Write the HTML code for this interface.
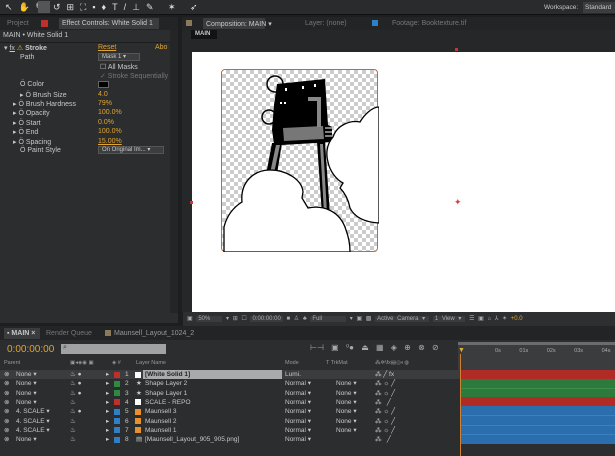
<!DOCTYPE html>
<html><head><meta charset="utf-8"><style>
*{margin:0;padding:0;box-sizing:border-box}
body{width:615px;height:456px;overflow:hidden;background:#1d1e1f;font-family:"Liberation Sans",sans-serif;font-size:7px;color:#c8c8c8;position:relative}
.a{position:absolute;white-space:nowrap}
.y{color:#e2a431}
.drop{position:absolute;background:#3b3d3f;border:1px solid #555;height:8px}
.row{position:absolute;left:0;width:460px;height:9px;font-size:6.5px;line-height:9px}
.row span{position:absolute}
.sw{position:absolute;width:6px;height:6px;top:1.5px}
.bar{position:absolute;left:461px;width:154px}
</style></head><body>
<!-- toolbar -->
<div class="a" style="left:0;top:0;width:615px;height:15px;background:#2a2b2c;border-bottom:1px solid #111"></div>
<div class="a" style="left:5px;top:2px;font-size:9px;color:#ddd;letter-spacing:6px">↖✋🔍↺⊞⛶▪♦T/⊥✎ ✶ ➶</div>
<div class="a" style="left:38px;top:1px;width:12px;height:12px;background:#555"></div>
<div class="a" style="left:544px;top:4px;font-size:6.5px">Workspace:</div>
<div class="a" style="left:583px;top:2px;width:32px;height:11px;background:#3b3d3f;font-size:6.5px;padding:2px">Standard</div>
<!-- left panel -->
<div class="a" style="left:0;top:17px;width:178px;height:306px;background:#2b2d2e"></div>
<div class="a" style="left:0;top:17px;width:178px;height:13px;background:#232425"></div>
<div class="a" style="left:7px;top:20px;color:#777">Project</div>
<div class="a" style="left:41px;top:20px;width:7px;height:7px;background:#c0302a"></div>
<div class="a" style="left:59px;top:18px;width:100px;height:11px;background:#3a3c3e;padding:2px 3px">Effect Controls: White Solid 1</div>
<div class="a" style="left:170px;top:30px;width:8px;height:283px;background:#242526"></div>
<div class="a" style="left:3px;top:32px">MAIN • White Solid 1</div>
<div class="a" style="left:0;top:42px;width:170px;height:1px;background:#1d1d1d"></div>
<div class="a" style="left:4px;top:44px">▾ <u>fx</u> <span style="color:#e5b030">⚠</span> <b>Stroke</b></div>
<div class="a y" style="left:98px;top:44px;text-decoration:underline">Reset</div>
<div class="a y" style="left:155px;top:44px">Abo</div>
<div class="a" style="left:20px;top:54px">Path</div>
<div class="drop" style="left:98px;top:53px;width:42px;padding-left:3px;font-size:6px;line-height:7px">Mask 1 ▾</div>
<div class="a" style="left:100px;top:63px">☐ All Masks</div>
<div class="a" style="left:100px;top:72px;color:#777">✓ Stroke Sequentially</div>
<div class="a" style="left:20px;top:81px">Ö Color</div>
<div class="a" style="left:98px;top:81px;width:11px;height:7px;background:#000;border:1px solid #666"></div>
<div class="a" style="left:20px;top:91px">▸ Ö Brush Size</div><div class="a y" style="left:98px;top:91px">4.0</div>
<div class="a" style="left:13px;top:100px">▸ Ö Brush Hardness</div><div class="a y" style="left:98px;top:100px">79%</div>
<div class="a" style="left:13px;top:109px">▸ Ö Opacity</div><div class="a y" style="left:98px;top:109px">100.0%</div>
<div class="a" style="left:13px;top:119px">▸ Ö Start</div><div class="a y" style="left:98px;top:119px">0.0%</div>
<div class="a" style="left:13px;top:128px">▸ Ö End</div><div class="a y" style="left:98px;top:128px">100.0%</div>
<div class="a" style="left:13px;top:138px">▸ Ö Spacing</div><div class="a y" style="left:98px;top:138px;text-decoration:underline">15.00%</div>
<div class="a" style="left:20px;top:147px">Ö Paint Style</div>
<div class="drop" style="left:98px;top:146px;width:66px;padding-left:3px;font-size:6px;line-height:7px">On Original Im... ▾</div>
<!-- comp panel -->
<div class="a" style="left:182px;top:17px;width:433px;height:13px;background:#232425"></div>
<div class="a" style="left:186px;top:20px;width:6px;height:6px;background:#8a7a5a"></div>
<div class="a" style="left:203px;top:18px;width:62px;height:11px;background:#3a3c3e;padding:2px 3px">Composition: MAIN ▾</div>
<div class="a" style="left:305px;top:20px;color:#777">Layer: (none)</div>
<div class="a" style="left:372px;top:20px;width:6px;height:6px;background:#2f7fc6"></div>
<div class="a" style="left:392px;top:20px;color:#777">Footage: Booktexture.tif</div>
<div class="a" style="left:182px;top:30px;width:433px;height:282px;background:#262728"></div>
<div class="a" style="left:191px;top:30px;width:26px;height:9px;background:#121314;font-size:6px;padding:1px 4px;font-weight:bold">MAIN</div>
<div class="a" style="left:192px;top:52px;width:423px;height:260px;background:#fff"></div>
<div class="a" style="left:221px;top:69px;width:157px;height:183px;border:1.5px solid #b0704a;border-radius:4px;background-color:#fff;background-image:linear-gradient(45deg,#ccc 25%,transparent 25%,transparent 75%,#ccc 75%),linear-gradient(45deg,#ccc 25%,transparent 25%,transparent 75%,#ccc 75%);background-size:8px 8px;background-position:0 0,4px 4px"></div>
<svg class="a" style="left:222px;top:70px" width="157" height="182" viewBox="0 0 157 182">
<circle cx="53" cy="14" r="8" fill="none" stroke="#000" stroke-width="1.5"/>
<circle cx="47" cy="47" r="7" fill="none" stroke="#000" stroke-width="1.5"/>
<path d="M50 73 L60 73 L54 110 L43 110Z" fill="#000"/><path d="M54 75 L58 75 L51 108 L47 108Z" fill="#888"/>
<path d="M95 72 L103 72 L108 145 L100 145Z" fill="#000"/><path d="M98 74 L101 74 L105 143 L102 143Z" fill="#888"/>
<path d="M55 14 L103 9 L106 55 L110 57 L110 72 L60 75 L52 74 L50 60 L52 35 Z" fill="#000"/>
<path d="M61 58 L101 56 L102 69 L62 71Z" fill="#777"/>
<path d="M86 27 L99 27 L99 57 L95 57 L95 31 L86 31Z" fill="#888"/>
<path d="M103 58 L110 58 M103 62 L110 62 M103 66 L110 66" stroke="#fff" stroke-width="1"/>
<rect x="63" y="18" width="2" height="3" fill="#fff"/><rect x="80" y="16" width="2" height="3" fill="#fff"/><rect x="92" y="14" width="2" height="3" fill="#fff"/><rect x="58" y="32" width="2" height="2" fill="#fff"/><rect x="62" y="32" width="2" height="2" fill="#fff"/>
<path d="M157 37 C150 37 142 45 138 52 C128 50 115 55 111 67 C104 75 104 85 106 92 C108 102 115 110 121 113 L118 118 C122 122 126 128 128 138 C132 146 140 152 157 153Z" fill="#fff" stroke="#000" stroke-width="1.3"/>
<path d="M2 182 L2 157 C5 145 12 137 20 132 C18 112 32 100 48 100 C65 100 80 110 81 122 L80 128 L86 138 C100 135 118 140 124 160 C127 168 128 175 128 182Z" fill="#fff" stroke="#000" stroke-width="1.3"/>
</svg>
<div class="a" style="left:190px;top:201px;width:3px;height:3px;background:#c33"></div>
<div class="a" style="left:455px;top:48px;width:3px;height:3px;background:#c33"></div>
<div class="a" style="left:454px;top:197px;color:#c44;font-size:9px">✦</div>
<div class="a" style="left:183px;top:312px;width:432px;height:14px;background:#2e2f30;font-size:6px;padding:3px 4px;color:#aaa;word-spacing:2px">▣ <span style="background:#3a3c3e;padding:0 12px 0 2px">50%</span> ▾ ⊞ ☐ <span style="background:#3a3c3e;padding:0 2px">0:00:00:00</span> ■ ♙ ♣ <span style="background:#3a3c3e;padding:0 24px 0 2px">Full</span> ▾ ▣ ▩ <span style="background:#3a3c3e;padding:0 4px 0 2px">Active Camera ▾</span> <span style="background:#3a3c3e;padding:0 4px 0 2px">1 View ▾</span> ☰ ▣ ⌂ ⅄ ✶ <span class="y">+0.0</span></div>
<!-- timeline -->
<div class="a" style="left:0;top:326px;width:615px;height:130px;background:#232425"></div>
<div class="a" style="left:4px;top:328px;width:36px;height:11px;background:#3a3c3e;padding:2px 3px;font-weight:bold">▪ MAIN ×</div>
<div class="a" style="left:46px;top:330px;color:#777">Render Queue</div>
<div class="a" style="left:105px;top:330px;width:6px;height:6px;background:#8a7a5a"></div>
<div class="a" style="left:114px;top:330px;color:#999">Maunsell_Layout_1024_2</div>
<div class="a" style="left:0;top:340px;width:615px;height:116px;background:#2b2d2e"></div>
<div class="a y" style="left:7px;top:344px;font-size:10px">0:00:00:00</div>
<div class="a" style="left:61px;top:344px;width:105px;height:10px;background:#a0a2a3;font-size:7px;color:#333;padding-left:2px">⌕</div>
<div class="a" style="left:310px;top:343px;font-size:8px;color:#aaa;word-spacing:5px">⊢⊣ ▣ ⁰● ⏏ ▦ ◈ ⊕ ⊗ ⊘</div>
<div class="a" style="left:0;top:360px;width:460px;height:9px;font-size:5.5px;color:#999"><span class="a" style="left:4px">Parent</span><span class="a" style="left:70px">▣◂◈◉ ▣</span><span class="a" style="left:112px">◈ #</span><span class="a" style="left:136px">Layer Name</span><span class="a" style="left:285px">Mode</span><span class="a" style="left:326px">T TrkMat</span><span class="a" style="left:375px">⁂✲\fx▤◎◐◍</span></div>
<div class="a" style="left:458px;top:342px;width:157px;height:28px;background:#3a3c3e"></div>
<div class="a" style="left:458px;top:342px;width:157px;height:3px;background:#6a6c6e"></div>
<div class="a" style="left:458px;top:348px;width:157px;font-size:5.5px;color:#aaa;word-spacing:17px">&nbsp;&nbsp;0s 01s 02s 03s 04s 05s</div>
<div class="a" style="left:458px;top:347px;color:#e2b030;font-size:7px">▼</div>
<div class="a" style="left:460px;top:354px;width:1px;height:102px;background:#d08030"></div>
<div class="bar" style="top:370px;height:9px;background:#b02a26"></div>
<div class="bar" style="top:379px;height:18px;background:#2c7a3c"></div>
<div class="bar" style="top:388px;height:1px;background:#3e8c4e"></div>
<div class="bar" style="top:397px;height:9px;background:#b02a26"></div>
<div class="bar" style="top:406px;height:38px;background:#2a6eae"></div>
<div class="bar" style="top:415px;height:1px;background:#3b80c0"></div><div class="bar" style="top:425px;height:1px;background:#3b80c0"></div><div class="bar" style="top:434px;height:1px;background:#3b80c0"></div>
<div class="a" style="left:0;top:370px;width:460px;height:80px;font-size:6.2px;line-height:9.3px">
<div class="row" style="top:0;background:#3a3c3e"><span style="left:4px">⊗</span><span style="left:16px">None ▾</span><span style="left:70px">♨ ●</span><span style="left:106px">▸</span><span class="sw" style="left:114px;background:#c0302a"></span><span style="left:125px">1</span><span class="sw" style="left:135px;background:#fff"></span><span style="left:143px;background:#aaa;color:#222;width:139px;padding-left:2px;font-weight:bold">[White Solid 1]</span><span style="left:285px">Lumi.</span><span style="left:375px">⁂ ╱ fx</span></div>
<div class="row" style="top:9.3px"><span style="left:4px">⊗</span><span style="left:16px">None ▾</span><span style="left:70px">♨ ●</span><span style="left:106px">▸</span><span class="sw" style="left:114px;background:#2e8a3e"></span><span style="left:125px">2</span><span style="left:136px">★</span><span style="left:145px">Shape Layer 2</span><span style="left:285px">Normal ▾</span><span style="left:336px">None ▾</span><span style="left:375px">⁂ ☼ ╱</span></div>
<div class="row" style="top:18.6px"><span style="left:4px">⊗</span><span style="left:16px">None ▾</span><span style="left:70px">♨ ●</span><span style="left:106px">▸</span><span class="sw" style="left:114px;background:#2e8a3e"></span><span style="left:125px">3</span><span style="left:136px">★</span><span style="left:145px">Shape Layer 1</span><span style="left:285px">Normal ▾</span><span style="left:336px">None ▾</span><span style="left:375px">⁂ ☼ ╱</span></div>
<div class="row" style="top:27.9px"><span style="left:4px">⊗</span><span style="left:16px">None ▾</span><span style="left:70px">♨</span><span style="left:106px">▸</span><span class="sw" style="left:114px;background:#c0302a"></span><span style="left:125px">4</span><span class="sw" style="left:135px;background:#fff"></span><span style="left:145px">SCALE - REPO</span><span style="left:285px">Normal ▾</span><span style="left:336px">None ▾</span><span style="left:375px">⁂ &nbsp; ╱</span></div>
<div class="row" style="top:37.2px"><span style="left:4px">⊗</span><span style="left:16px">4. SCALE ▾</span><span style="left:70px">♨ ●</span><span style="left:106px">▸</span><span class="sw" style="left:114px;background:#2f7fc6"></span><span style="left:125px">5</span><span class="sw" style="left:135px;background:#e8902a"></span><span style="left:145px">Maunsell 3</span><span style="left:285px">Normal ▾</span><span style="left:336px">None ▾</span><span style="left:375px">⁂ ☼ ╱</span></div>
<div class="row" style="top:46.5px"><span style="left:4px">⊗</span><span style="left:16px">4. SCALE ▾</span><span style="left:70px">♨</span><span style="left:106px">▸</span><span class="sw" style="left:114px;background:#2f7fc6"></span><span style="left:125px">6</span><span class="sw" style="left:135px;background:#e8902a"></span><span style="left:145px">Maunsell 2</span><span style="left:285px">Normal ▾</span><span style="left:336px">None ▾</span><span style="left:375px">⁂ ☼ ╱</span></div>
<div class="row" style="top:55.8px"><span style="left:4px">⊗</span><span style="left:16px">4. SCALE ▾</span><span style="left:70px">♨</span><span style="left:106px">▸</span><span class="sw" style="left:114px;background:#2f7fc6"></span><span style="left:125px">7</span><span class="sw" style="left:135px;background:#e8902a"></span><span style="left:145px">Maunsell 1</span><span style="left:285px">Normal ▾</span><span style="left:336px">None ▾</span><span style="left:375px">⁂ ☼ ╱</span></div>
<div class="row" style="top:65.1px"><span style="left:4px">⊗</span><span style="left:16px">None ▾</span><span style="left:70px">♨</span><span style="left:106px">▸</span><span class="sw" style="left:114px;background:#2f7fc6"></span><span style="left:125px">8</span><span style="left:136px">▤</span><span style="left:145px">[Maunsell_Layout_905_905.png]</span><span style="left:285px">Normal ▾</span><span style="left:375px">⁂ &nbsp; ╱</span></div>
</div>
</body></html>
